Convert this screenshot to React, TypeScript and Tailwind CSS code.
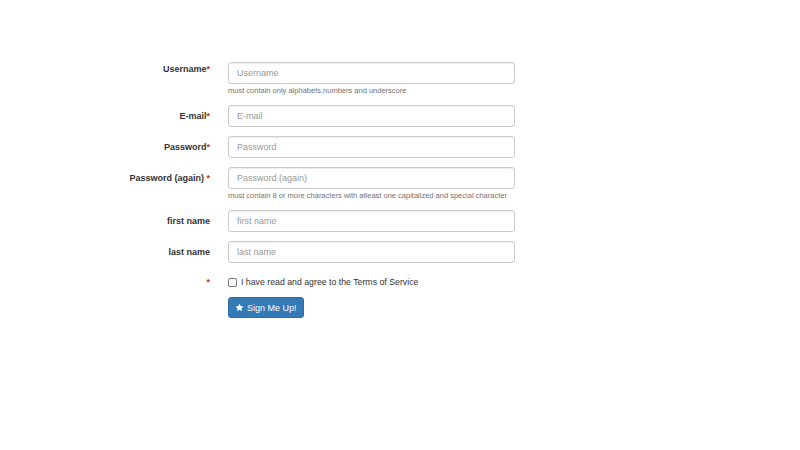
import React from 'react';

interface Field {
  label: string;
  required?: boolean;
  spaced?: boolean;
  placeholder: string;
  help?: string;
  labelTop: string;
}

const fields: Field[] = [
  { label: 'Username', required: true, placeholder: 'Username', help: 'must contain only alphabets,numbers and underscore', labelTop: 'pt-0' },
  { label: 'E-mail', required: true, placeholder: 'E-mail', labelTop: 'pt-[4px]' },
  { label: 'Password', required: true, placeholder: 'Password', labelTop: 'pt-[4px]' },
  {
    label: 'Password (again)',
    required: true,
    spaced: true,
    placeholder: 'Password (again)',
    help: 'must contain 8 or more characters with atleast one capitalized and special character',
    labelTop: 'pt-[4px]',
  },
  { label: 'first name', placeholder: 'first name', labelTop: 'pt-[4px]' },
  { label: 'last name', placeholder: 'last name', labelTop: 'pt-[4px]' },
];

function Star() {
  return (
    <svg width="9" height="9" viewBox="0 0 24 24" className="fill-white">
      <path d="M12 1.5l3.2 7.2 7.8.7-5.9 5.2 1.8 7.7L12 18.3l-6.9 4 1.8-7.7L1 9.4l7.8-.7z" />
    </svg>
  );
}

export default function App() {
  return (
    <div className="w-[800px] h-[450px] bg-white text-[#333] font-['Liberation_Sans',Arial,sans-serif] pt-[62px]">
      <div className="flex flex-col gap-[9px]">
        {fields.map((f) => (
          <div key={f.label} className="flex items-start">
            <label
              className={`w-[210px] shrink-0 text-right text-[9px] leading-[14px] font-bold ${f.labelTop}`}
            >
              {f.label}
              {f.required && <span className="text-[#c9302c]">{f.spaced ? ' *' : '*'}</span>}
            </label>
            <div className="ml-[18px] w-[287px]">
              <input
                placeholder={f.placeholder}
                className="block w-full h-[22px] px-[8px] text-[9px] border border-[#ccc] rounded-[3px] shadow-[inset_0_1px_1px_rgba(0,0,0,0.075)] placeholder:text-[#999] outline-none"
              />
              {f.help && (
                <p className="mt-[1px] text-[7.5px] leading-[11px] text-[#737373] whitespace-nowrap antialiased">
                  {f.help}
                </p>
              )}
            </div>
          </div>
        ))}
      </div>

      <div className="flex items-center mt-[13px]">
        <div className="w-[210px] shrink-0 text-right text-[9px] leading-[12px] font-bold text-[#c9302c]">
          *
        </div>
        <label className="ml-[18px] flex items-center gap-[4px] text-[8.75px] leading-[12px]">
          <span className="w-[9px] h-[9px] border border-[#767676] rounded-[2px] bg-white" />
          I have read and agree to the Terms of Service
        </label>
      </div>

      <div className="flex mt-[9px]">
        <div className="w-[210px] shrink-0" />
        <button className="ml-[18px] h-[21px] px-[6px] flex items-center gap-[3px] bg-[#337ab7] border border-[#2e6da4] rounded-[3px] text-white text-[9px] leading-[12px]">
          <Star />
          Sign Me Up!
        </button>
      </div>
    </div>
  );
}
